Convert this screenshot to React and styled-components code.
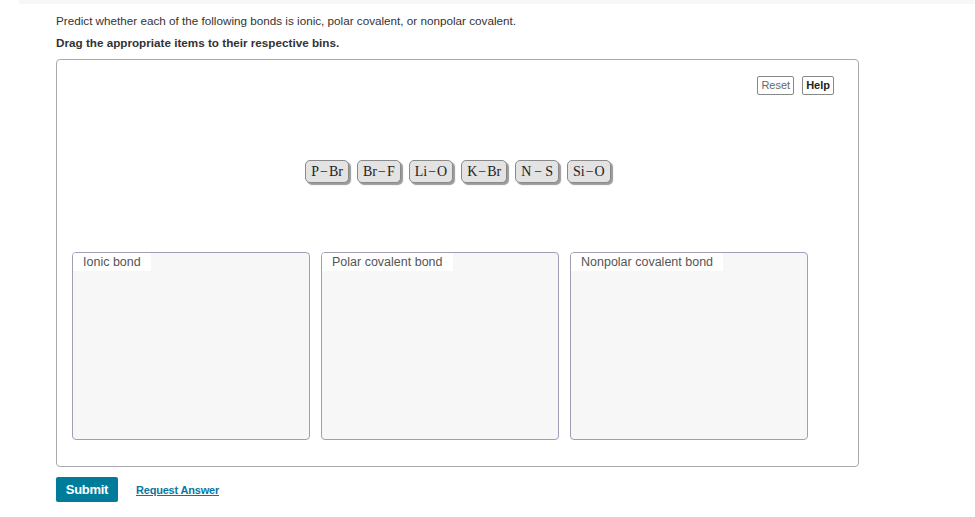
import React from 'react'
import styled, { createGlobalStyle } from 'styled-components'

const bonds = [
    ['P', 'Br'],
    ['Br', 'F'],
    ['Li', 'O'],
    ['K', 'Br'],
    ['N', 'S', true],
    ['Si', 'O'],
]

const bins = ['Ionic bond', 'Polar covalent bond', 'Nonpolar covalent bond']

function App() {
    return (
        <>
            <Global />
            <TopStrip />
            <Page>
                <Prompt>Predict whether each of the following bonds is ionic, polar covalent, or nonpolar covalent.</Prompt>
                <Instruction>Drag the appropriate items to their respective bins.</Instruction>

                <Board>
                    <Tools>
                        <ToolButton>Reset</ToolButton>
                        <ToolButton $strong>Help</ToolButton>
                    </Tools>

                    <Pills>
                        {bonds.map(([a, b, wide]) => (
                            <Pill key={a + b}>
                                {a}<Dash $wide={wide}>−</Dash>{b}
                            </Pill>
                        ))}
                    </Pills>

                    <Bins>
                        {bins.map(label => (
                            <Bin key={label}>
                                <BinLabel>{label}</BinLabel>
                            </Bin>
                        ))}
                    </Bins>
                </Board>

                <Actions>
                    <Submit>Submit</Submit>
                    <RequestLink href="#">Request Answer</RequestLink>
                </Actions>
            </Page>
        </>
    )
}

export default App

const Global = createGlobalStyle`
body {
    margin: 0;
    background: #fff;
    font-family: Arial, "Liberation Sans", sans-serif;
}
`

const TopStrip = styled.div`
margin-left: 19px;
height: 4px;
background: #f7f7f7;
`

const Page = styled.div`
padding-left: 56px;
width: 803px;
`

const Prompt = styled.p`
margin: 9px 0 0;
font-size: 11.7px;
line-height: 16px;
color: #333;
`

const Instruction = styled.p`
margin: 6px 0 0;
font-size: 11.7px;
line-height: 16px;
font-weight: bold;
color: #333;
`

const Board = styled.div`
margin-top: 8px;
height: 406px;
border: 1px solid #aaa;
border-radius: 4px;
box-sizing: content-box;
display: flex;
flex-direction: column;
`

const Tools = styled.div`
display: flex;
justify-content: flex-end;
gap: 8px;
padding: 16px 24px 0 0;
`

const ToolButton = styled.button`
height: 19px;
padding: 0 3px;
border: 1px solid #888;
border-radius: 2px;
background: #fff;
font-family: Arial, "Liberation Sans", sans-serif;
font-size: 11px;
color: ${p => (p.$strong ? '#222' : '#666')};
font-weight: ${p => (p.$strong ? 'bold' : 'normal')};
line-height: 17px;
`

const Pills = styled.div`
display: flex;
justify-content: center;
gap: 8px;
margin-top: 65px;
padding-left: 1px;
`

const Pill = styled.div`
height: 21px;
padding: 0 5px;
border: 1px solid #8a8a8a;
border-radius: 5px;
background: #e3e3e3;
box-shadow: 2px 2px 1px #9a9a9a;
font-family: "Liberation Serif", "DejaVu Serif", serif;
font-size: 14px;
line-height: 21px;
color: #222;
display: flex;
align-items: center;
`

const Dash = styled.span`
margin: 0 ${p => (p.$wide ? '3px' : '1px')};
`

const Bins = styled.div`
display: flex;
gap: 11px;
margin-top: 69px;
padding-left: 15px;
`

const Bin = styled.div`
width: 236px;
height: 186px;
border: 1px solid #a09eb4;
border-radius: 4px;
background: #f7f7f7;
display: flex;
align-items: flex-start;
`

const BinLabel = styled.div`
background: #fff;
padding: 1px 10px 1px 10px;
min-width: 57px;
font-size: 12.5px;
line-height: 16px;
color: #555;
border-top-left-radius: 3px;
`

const Actions = styled.div`
display: flex;
align-items: center;
gap: 18px;
margin-top: 10px;
`

const Submit = styled.button`
width: 62px;
height: 25px;
border: none;
border-radius: 2px;
background: #007c9b;
color: #fff;
font-family: Arial, "Liberation Sans", sans-serif;
font-size: 13px;
font-weight: bold;
letter-spacing: -0.3px;
`

const RequestLink = styled.a`
font-size: 11px;
font-weight: bold;
color: #0b76a0;
text-decoration: underline;
letter-spacing: -0.2px;
`
